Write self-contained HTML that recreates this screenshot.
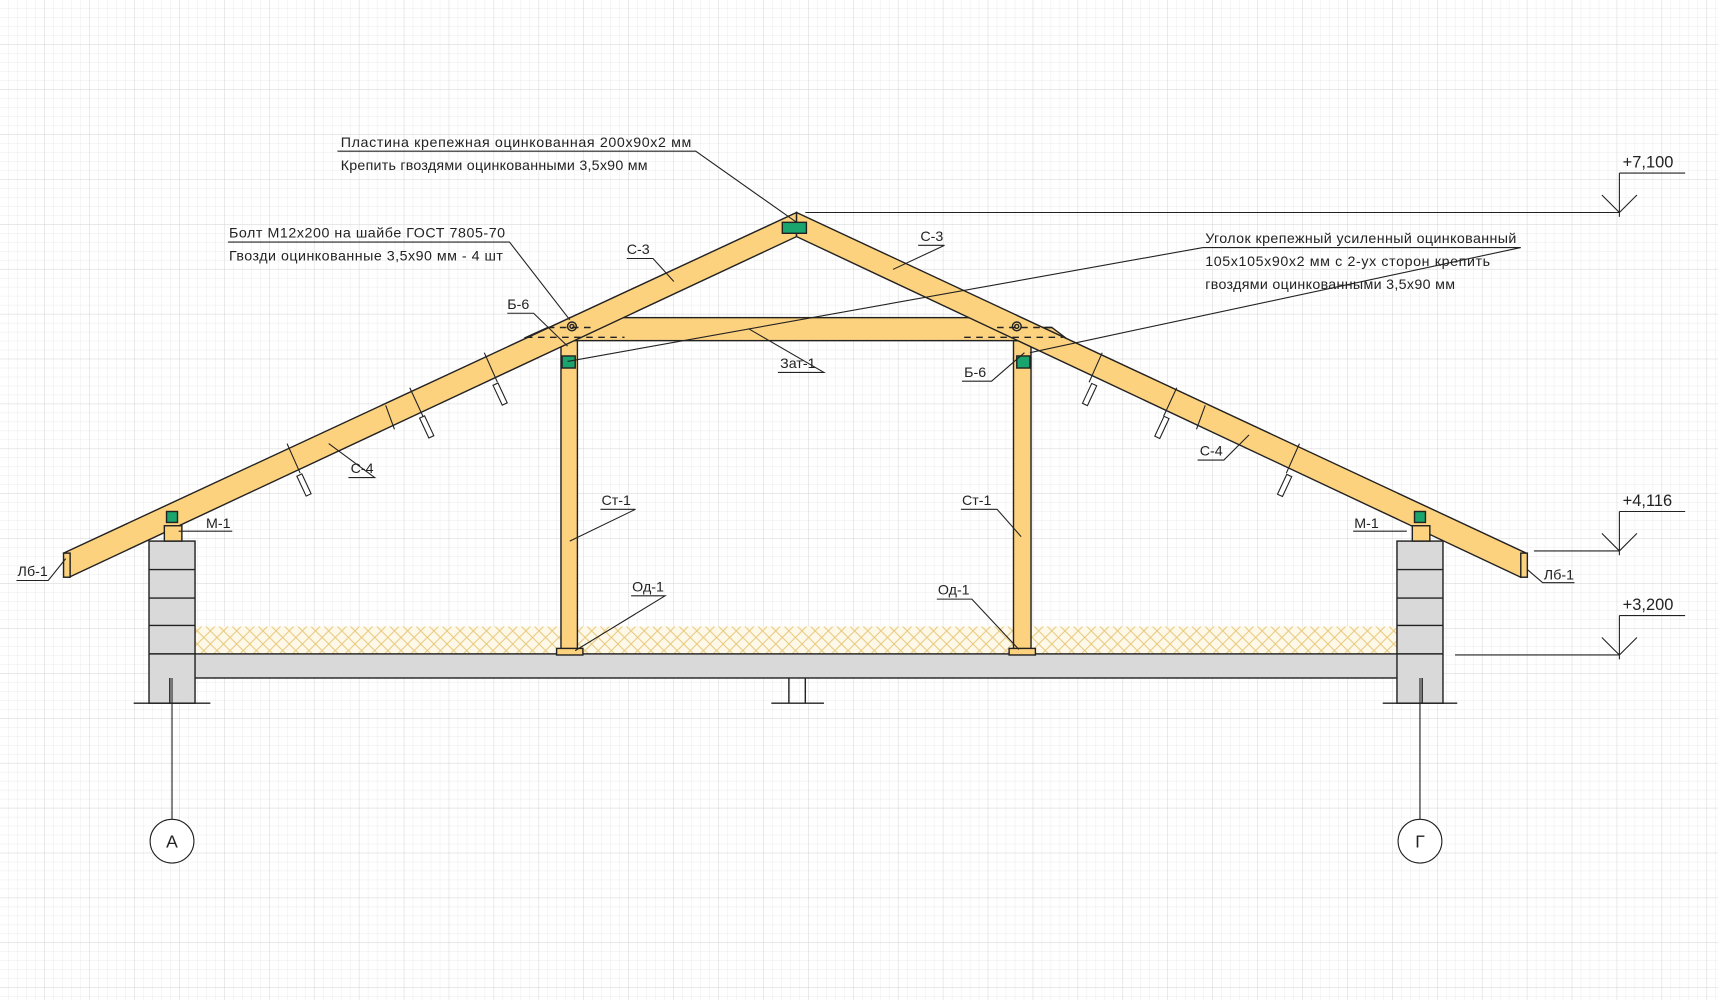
<!DOCTYPE html>
<html><head><meta charset="utf-8"><style>
html,body{margin:0;padding:0;background:#fff;width:1718px;height:1000px;overflow:hidden}
svg{display:block}
text{font-family:"Liberation Sans",sans-serif;font-size:13px;fill:#222}
</style></head><body>
<svg width="1718" height="1000" viewBox="0 0 1568 913" preserveAspectRatio="none">
<defs>
<pattern id="g" width="8.2" height="8.2" patternUnits="userSpaceOnUse"><path d="M8.2 0V8.2H0" fill="none" stroke="#e6e6e6" stroke-width="0.7"/></pattern>
<pattern id="G" width="41" height="41" patternUnits="userSpaceOnUse"><rect width="41" height="41" fill="url(#g)"/><path d="M41 0V41H0" fill="none" stroke="#d2d2d2" stroke-width="0.8"/></pattern>
<pattern id="h" width="12" height="12" patternUnits="userSpaceOnUse"><rect width="12" height="12" fill="#fdf8e8"/><path d="M0 0L12 12M12 0L0 12" stroke="#e8c87a" stroke-width="0.9"/></pattern>
</defs>
<rect width="1568" height="913" fill="url(#G)"/>
<g stroke="#222" stroke-width="1.3">
<rect x="178" y="572" width="1097" height="25" fill="url(#h)" stroke="none"/>
<rect x="155" y="597" width="1145" height="22" fill="#d9d9d9"/>
<g fill="#d9d9d9">
<rect x="136" y="494" width="42" height="148"/><path d="M136 520H178M136 546H178M136 571H178M136 597H178M155 619V642" fill="none"/>
<rect x="1275" y="494" width="42" height="148"/><path d="M1275 520H1317M1275 546H1317M1275 571H1317M1275 597H1317M1298 619V642" fill="none"/>
</g>
<path d="M122 642H192M1262 642H1330M704 642H752" fill="none"/>
<path d="M720 619V642M735 619V642" fill="none"/>
<g fill="#fdd27f">
<rect x="512" y="311" width="15" height="286"/>
<rect x="925" y="311" width="16" height="286"/>
<rect x="520" y="290" width="410" height="21"/>
<polygon points="480,308 500,299 520,299 520,311 500,311"/>
<polygon points="930,299 960,299 972,308 950,311 930,311"/>
<polygon points="58,505 727,194 727,216 63,527"/>
<polygon points="727,194 1393,505 1388,527 727,216"/>
<rect x="58" y="505" width="6" height="22"/><rect x="1388" y="505" width="6" height="22"/>
<rect x="150" y="480" width="16" height="14"/><rect x="1289" y="480" width="16" height="14"/>
<rect x="508" y="592" width="24" height="6"/><rect x="921" y="592" width="24" height="6"/>
</g>
<path d="M480 308H570M880 308H970M500 299H540M910 299H960" stroke-dasharray="6 5" fill="none"/>
<g fill="#1aa56f">
<rect x="714" y="203" width="22" height="10"/><rect x="513" y="325" width="12" height="11"/><rect x="928" y="325" width="12" height="11"/>
<rect x="152" y="467" width="10" height="10"/><rect x="1291" y="467" width="10" height="10"/>
</g>
<g fill="none"><circle cx="522" cy="298" r="4"/><circle cx="522" cy="298" r="1.8"/><circle cx="928" cy="298" r="4"/><circle cx="928" cy="298" r="1.8"/></g>
<g fill="#fff" stroke-width="1"><rect x="275" y="433" width="5" height="20" transform="rotate(-25 277 443)"/><rect x="387" y="380" width="5" height="20" transform="rotate(-25 389 390)"/><rect x="454" y="350" width="5" height="20" transform="rotate(-25 456 360)"/>
<rect x="1170" y="433" width="5" height="20" transform="rotate(25 1172 443)"/><rect x="1058" y="380" width="5" height="20" transform="rotate(25 1060 390)"/><rect x="992" y="350" width="5" height="20" transform="rotate(25 994 360)"/></g>
<g fill="none" stroke-width="1">
<path d="M262 405L274 432M374 354L386 380M442 322L454 349M1186 405L1174 432M1074 354L1062 380M1006 322L994 349"/>
<path d="M352 370L360 392M1100 370L1092 392"/>
</g>
<g fill="none" stroke-width="1">
<path d="M308 138H635L727 203"/><path d="M208 221H465L520 292"/><path d="M1098 226H1388L940 322M1098 226L518 330"/>
<path d="M572 236H596L615 257"/><path d="M838 224H862L815 246"/><path d="M463 286H487L518 316"/><path d="M878 348H905L935 322"/>
<path d="M710 340H752L683 300"/><path d="M318 436H342L300 405"/><path d="M1093 420H1117L1140 397"/>
<path d="M548 465H580L520 494"/><path d="M877 465H910L932 490"/><path d="M576 544H607L525 594"/><path d="M855 547H887L930 593"/>
<path d="M163 485H212"/><path d="M1284 485H1235"/><path d="M15 530H44L60 510"/><path d="M1437 532H1408L1394 520"/>
<path d="M735 194H1478M1400 503H1478M1328 598H1478M1478 158V198M1462 178L1478 194L1494 178M1478 467V507M1462 487L1478 503L1494 487M1478 562V602M1462 582L1478 598L1494 582"/>
<path d="M1478 158H1538M1478 467H1538M1478 562H1538"/>
<path d="M157 619V748M1296 619V748"/>
</g>
<circle cx="157" cy="768" r="20" fill="#fff" stroke-width="1"/><circle cx="1296" cy="768" r="20" fill="#fff" stroke-width="1"/>
</g>
<g style="font-stretch:condensed">
<text x="311" y="134" textLength="320">Пластина крепежная оцинкованная 200х90х2 мм</text>
<text x="311" y="155" textLength="280">Крепить гвоздями оцинкованными 3,5х90 мм</text>
<text x="209" y="217" textLength="252">Болт М12х200 на шайбе ГОСТ 7805-70</text>
<text x="209" y="238" textLength="250">Гвозди оцинкованные 3,5х90 мм - 4 шт</text>
<text x="1100" y="222" textLength="284">Уголок крепежный усиленный оцинкованный</text>
<text x="1100" y="243" textLength="260">105х105х90х2 мм с 2-ух сторон крепить</text>
<text x="1100" y="264" textLength="228">гвоздями оцинкованными 3,5х90 мм</text>
</g>
<text x="572" y="232">С-3</text><text x="840" y="220">С-3</text>
<text x="463" y="282">Б-6</text><text x="880" y="344">Б-6</text>
<text x="712" y="336">Зат-1</text>
<text x="320" y="432">С-4</text><text x="1095" y="416">С-4</text>
<text x="549" y="461">Ст-1</text><text x="878" y="461">Ст-1</text>
<text x="577" y="540">Од-1</text><text x="856" y="543">Од-1</text>
<text x="188" y="482">М-1</text><text x="1236" y="482">М-1</text>
<text x="16" y="526">Лб-1</text><text x="1409" y="529">Лб-1</text>
<text x="1481" y="153" style="font-size:15px">+7,100</text>
<text x="1481" y="462" style="font-size:15px">+4,116</text>
<text x="1481" y="557" style="font-size:15px">+3,200</text>
<text x="157" y="774" text-anchor="middle" style="font-size:16px">А</text>
<text x="1296" y="774" text-anchor="middle" style="font-size:16px">Г</text>
</svg>
</body></html>
